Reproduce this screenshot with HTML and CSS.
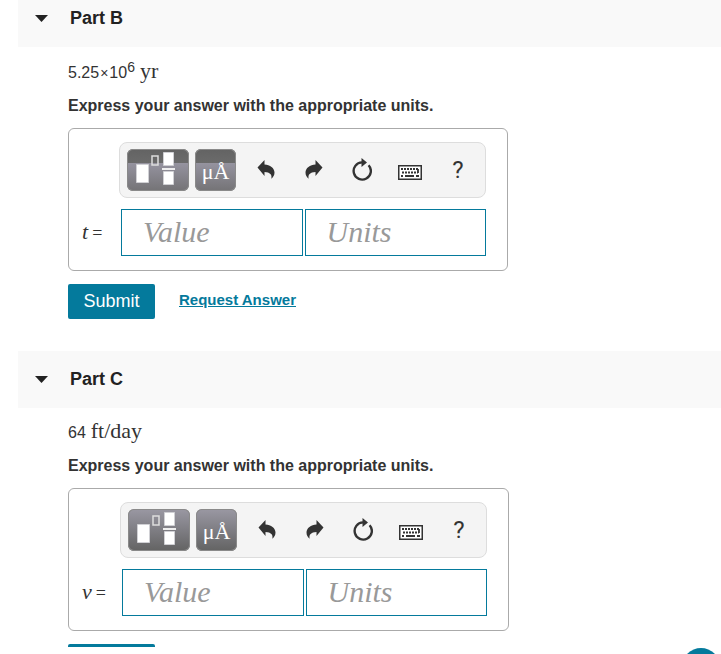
FILE: index.html
```html
<!DOCTYPE html>
<html lang="en">
<head>
    <meta charset="utf-8">
    <title>Part B</title>
    <link rel="stylesheet" href="styles.css">
</head>
<body>
    <svg class="symbols" aria-hidden="true">
        <symbol id="caret" viewBox="0 0 13 7"><path d="M0 0h13L6.5 7z"/></symbol>
        <symbol id="templates" viewBox="0 0 62 42">
            <g fill="#fff" stroke="#d0d0d4">
                <path d="M9.500 15.500h12v18h-12z"/>
                <path d="M36.500 3.500h10v13h-10z"/>
                <path d="M36.500 22.500h10v13h-10z"/>
            </g>
            <path d="M25 7h6v9h-6z" fill="none" stroke="#ddd" stroke-width="1.500"/>
            <path d="M35 20h13" stroke="#eee" stroke-width="2"/>
        </symbol>
        <symbol id="undo" viewBox="0 0 18 20">
            <path d="M.5 7.500L7.500 0v4.500C13 5 17.500 8 17.500 12.500c0 2.700-1.200 4.800-3.200 6.300 1-4.300-1.300-6.500-6.800-6.800v4z"/>
        </symbol>
        <symbol id="redo" viewBox="0 0 18 20">
            <path d="M17.500 7.500L10.500 0v4.500C5 5 .5 8 .5 12.500c0 2.700 1.200 4.800 3.200 6.300-1-4.300 1.300-6.500 6.800-6.800v4z"/>
        </symbol>
        <symbol id="reset" viewBox="0 0 20 24">
            <path d="M16.600 7.200A8.600 8.600 0 1 1 10 4.400" fill="none" stroke="#333" stroke-width="2.400"/>
            <path d="M9.500 0l5.500 4.500L9.500 9z"/>
        </symbol>
        <symbol id="keyboard" viewBox="0 0 24 15">
            <path d="M.75.75h22.500v13.500H.75z" fill="#fff" stroke="#333" stroke-width="1.500"/>
            <path d="M3 4h18M4 7.500h16" fill="none" stroke="#333" stroke-width="1.800" stroke-dasharray="2 1"/>
            <path d="M3 11h2M7 11h9M18 11h3M20 4v4" fill="none" stroke="#333" stroke-width="1.800"/>
        </symbol>
    </svg>

    <main class="assignment">
        <section class="part">
            <h2 class="part-header">
                <button class="part-toggle" type="button" aria-expanded="true">
                    <svg class="caret"><use href="#caret"/></svg>
                    Part B
                </button>
            </h2>
            <form class="part-body">
                <p class="quantity quantity-power"><span>5.25<small>×</small>10<sup>6</sup></span> <span class="unit">yr</span></p>
                <p class="instruction">Express your answer with the appropriate units.</p>
                <div class="answer">
                    <div class="toolbar" role="toolbar">
                        <button class="tool-button tool-templates tool-split" type="button" aria-label="Templates"><svg><use href="#templates"/></svg></button>
                        <button class="tool-button tool-units tool-split" type="button">μÅ</button>
                        <button class="tool-icon" type="button" aria-label="Undo"><svg class="icon-arrow"><use href="#undo"/></svg></button>
                        <button class="tool-icon" type="button" aria-label="Redo"><svg class="icon-arrow"><use href="#redo"/></svg></button>
                        <button class="tool-icon" type="button" aria-label="Reset"><svg class="icon-reset"><use href="#reset"/></svg></button>
                        <button class="tool-icon" type="button" aria-label="Keyboard"><svg class="icon-keyboard"><use href="#keyboard"/></svg></button>
                        <button class="tool-icon" type="button">?</button>
                    </div>
                    <label class="variable" for="value-b"><i>t</i> <span>=</span></label>
                    <div class="fields">
                        <input id="value-b" type="text" placeholder="Value">
                        <input type="text" placeholder="Units" aria-label="Units">
                    </div>
                </div>
                <div class="actions">
                    <button class="submit" type="submit">Submit</button>
                    <a class="request" href="#">Request Answer</a>
                </div>
            </form>
        </section>

        <section class="part">
            <h2 class="part-header">
                <button class="part-toggle" type="button" aria-expanded="true">
                    <svg class="caret"><use href="#caret"/></svg>
                    Part C
                </button>
            </h2>
            <form class="part-body">
                <p class="quantity"><span>64</span> <span class="unit">ft/day</span></p>
                <p class="instruction">Express your answer with the appropriate units.</p>
                <div class="answer answer-wide">
                    <div class="toolbar" role="toolbar">
                        <button class="tool-button tool-templates" type="button" aria-label="Templates"><svg><use href="#templates"/></svg></button>
                        <button class="tool-button tool-units" type="button">μÅ</button>
                        <button class="tool-icon" type="button" aria-label="Undo"><svg class="icon-arrow"><use href="#undo"/></svg></button>
                        <button class="tool-icon" type="button" aria-label="Redo"><svg class="icon-arrow"><use href="#redo"/></svg></button>
                        <button class="tool-icon" type="button" aria-label="Reset"><svg class="icon-reset"><use href="#reset"/></svg></button>
                        <button class="tool-icon" type="button" aria-label="Keyboard"><svg class="icon-keyboard"><use href="#keyboard"/></svg></button>
                        <button class="tool-icon" type="button">?</button>
                    </div>
                    <label class="variable" for="value-c"><i>v</i> <span>=</span></label>
                    <div class="fields">
                        <input id="value-c" type="text" placeholder="Value">
                        <input type="text" placeholder="Units" aria-label="Units">
                    </div>
                </div>
                <div class="actions">
                    <button class="submit" type="submit" aria-label="Submit"></button>
                </div>
            </form>
        </section>
    </main>
    <button class="help" type="button" aria-label="Help"></button>
</body>
</html>
```
FILE: styles.css
```css
* {
    box-sizing: border-box;
}
body {
    position: relative;
    display: flex;
    flex-direction: column;
    height: 100vh;
    margin: 0;
    padding-bottom: 7px;
    overflow: hidden;
    background: #fff;
    color: #333;
    font: 16px/20px "Liberation Sans", Arial, sans-serif;
}
button {
    margin: 0;
    padding: 0;
    border: 0;
    background: none;
    color: inherit;
    font: inherit;
    cursor: pointer;
}
svg {
    display: block;
    fill: #333;
}
.symbols {
    position: absolute;
    width: 0;
    height: 0;
}
.assignment {
    flex: 1;
    min-height: 0;
    padding-left: 18px;
    overflow: hidden;
}

/* parts */
.part {
    margin-bottom: 32px;
}
.part:first-child {
    margin-top: -10px;
}
.part-header {
    margin: 0;
    background: #f9f9f9;
    color: #222;
    font-size: 18px;
}
.part-toggle {
    display: flex;
    align-items: center;
    gap: 22px;
    width: 100%;
    height: 57px;
    padding: 0 0 1px 17px;
}
.caret {
    width: 13px;
    height: 7px;
    fill: #222;
}
.part-body {
    padding: 9px 0 0 50px;
}
.quantity {
    display: flex;
    align-items: baseline;
    gap: 5px;
    height: 39px;
    margin: 0;
    line-height: 28px;
}
.quantity-power {
    height: 40px;
    line-height: 30px;
}
.quantity small {
    padding: 0 1px;
    font-size: 14px;
}
.quantity sup {
    font-size: 14px;
    line-height: 0;
}
.unit {
    font-family: "Liberation Serif", serif;
    font-size: 22px;
}
.instruction {
    margin: 0 0 12px;
    font-weight: bold;
}

/* answer box */
.answer {
    display: grid;
    grid-template-columns: 37px auto;
    gap: 11px 0;
    width: fit-content;
    padding: 13px 21px 14px 13px;
    border: 1px solid #aaa;
    border-radius: 6px;
}
.answer-wide {
    grid-template-columns: 38px auto;
}
.toolbar {
    grid-column: 2;
    display: flex;
    align-items: center;
    height: 56px;
    padding: 0 3px 0 7px;
    border: 1px solid #ddd;
    border-radius: 8px;
    background: #f4f4f4;
}
.tool-button {
    height: 42px;
    margin-right: 6px;
    border-radius: 6px;
    background: linear-gradient(#9a98a3, #636363);
    box-shadow: inset 0 0 0 1px #8a8a8a;
    color: #fff;
}
.tool-split {
    background: linear-gradient(#636363, #6b6b6b 34%, #95939f 34%, #747376);
}
.tool-templates {
    width: 62px;
}
.tool-templates svg {
    width: 62px;
    height: 42px;
}
.tool-units {
    width: 41px;
    padding-top: 3px;
    font: 22px/39px "Liberation Serif", serif;
}
.tool-icon {
    display: flex;
    align-items: center;
    justify-content: center;
    width: 48px;
    height: 42px;
    font: 24px/42px Roboto, sans-serif;
}
.icon-arrow {
    width: 18px;
    height: 20px;
}
.icon-reset {
    width: 20px;
    height: 24px;
}
.icon-keyboard {
    width: 24px;
    height: 15px;
    margin-top: 4px;
}
.variable {
    display: flex;
    align-items: baseline;
    gap: 4px;
    align-self: center;
    font-family: "Liberation Serif", serif;
    font-size: 18px;
}
.variable i {
    font-size: 22px;
}
.fields {
    display: flex;
    gap: 2px;
    padding-left: 2px;
}
.fields input {
    flex: 1;
    width: 0;
    height: 47px;
    padding: 0 21px 2px;
    border: 1px solid #047a9c;
    border-radius: 0;
    color: #333;
    font: italic 30px "Liberation Serif", serif;
}
.fields input::placeholder {
    color: #999;
    opacity: 1;
}

/* buttons under the box */
.actions {
    display: flex;
    align-items: center;
    gap: 24px;
    margin-top: 13px;
}
.submit {
    width: 87px;
    height: 35px;
    padding-bottom: 1px;
    border-radius: 2px;
    background: #047a9c;
    color: #fff;
    font-size: 18px;
}
.request {
    padding-bottom: 3px;
    color: #047a9c;
    font-size: 15px;
    font-weight: bold;
}
.help {
    position: absolute;
    right: 1px;
    bottom: -32px;
    width: 38px;
    height: 38px;
    border-radius: 50%;
    background: #047a9c;
}
```
